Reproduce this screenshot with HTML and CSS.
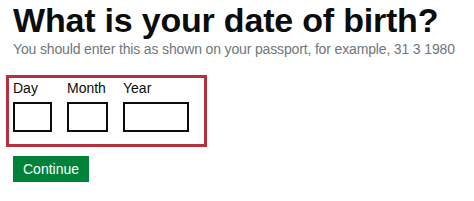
FILE: index.html
```html
<!DOCTYPE html>
<html lang="en">
<head>
    <meta charset="UTF-8">
    <meta name="viewport" content="width=device-width, initial-scale=1.0">
    <title>Date of birth</title>
    <link rel="stylesheet" href="styles.css">
</head>
<body>

<div class="page">
    <h1>What is your date of birth?</h1>
    <p class="hint">You should enter this as shown on your passport, for example, 31 3 1980</p>

    <div class="fecha">
        <div class="campo">
            <label for="dia">Day</label>
            <input type="text" id="dia" class="corto">
        </div>
        <div class="campo">
            <label for="mes">Month</label>
            <input type="text" id="mes" class="medio">
        </div>
        <div class="campo">
            <label for="anio">Year</label>
            <input type="text" id="anio" class="largo">
        </div>
    </div>

    <button>Continue</button>
</div>

</body>
</html>
```

FILE: styles.css
```css
body {
    font-family: "Liberation Sans", Arial, sans-serif;
    margin: 0;
    padding: 0;
    background-color: #ffffff;
    color: #0b0c0c;
}

.page {
    padding-left: 13px;
}

h1 {
    margin: 2px 0 0 0;
    font-size: 34px;
    line-height: 36px;
    font-weight: bold;
    letter-spacing: -0.2px;
}

.hint {
    margin: 3px 0 0 0;
    font-size: 14px;
    line-height: 16px;
    color: #6f777b;
    letter-spacing: -0.15px;
}

.fecha {
    display: inline-flex;
    gap: 15px;
    margin: 18px 0 0 -7px;
    padding: 1px 15px 12px 4px;
    border: 3px solid #b5313d;
}

.campo {
    display: flex;
    flex-direction: column;
    align-items: flex-start;
}

label {
    font-size: 14px;
    line-height: 18px;
    margin-bottom: 5px;
}

input[type="text"] {
    height: 30px;
    box-sizing: border-box;
    border: 2px solid #0b0c0c;
    margin: 0;
    padding: 4px;
    font-size: 14px;
}

.corto {
    width: 39px;
}

.medio {
    width: 41px;
}

.largo {
    width: 66px;
}

button {
    display: block;
    margin-top: 9px;
    padding: 4px 10px;
    font-family: inherit;
    font-size: 14px;
    line-height: 18px;
    color: #ffffff;
    background-color: #00823b;
    border: none;
    border-radius: 0;
    box-shadow: 0 2px 0 #003618;
    cursor: pointer;
}
```
